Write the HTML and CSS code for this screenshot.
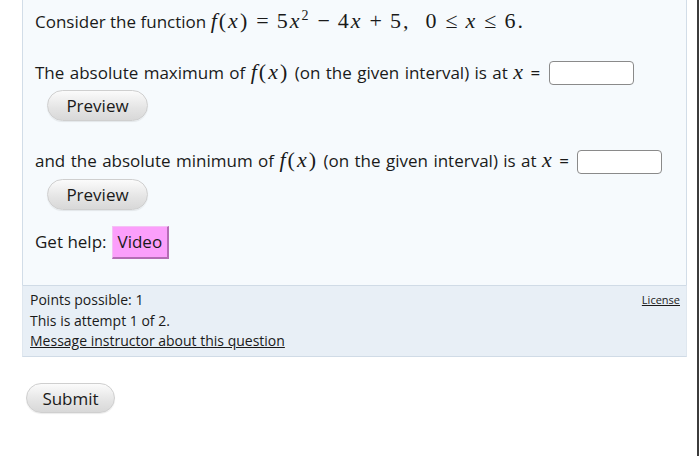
FILE: index.html
```html
<!DOCTYPE html>
<html>
<head>
<meta charset="utf-8">
<link rel="stylesheet" href="styles.css">
</head>
<body>
<div class="frame">
  <div class="question">
    <p class="line first">Consider the function <span class="math"><i>f</i>(<i>x</i>)<span class="mo">=</span>5<i>x</i><sup>2</sup><span class="mo">−</span>4<i>x</i><span class="mo">+</span>5,<span class="quad"></span>0<span class="mo">≤</span><i>x</i><span class="mo">≤</span>6.</span></p>
    <p class="line second">The absolute maximum of <span class="math"><i>f</i>(<i>x</i>)</span> (on the given interval) is at <span class="math"><i>x</i></span> = <span class="answer"></span></p>
    <button class="btn preview">Preview</button>
    <p class="line third">and the absolute minimum of <span class="math"><i>f</i>(<i>x</i>)</span> (on the given interval) is at <span class="math"><i>x</i></span> = <span class="answer"></span></p>
    <button class="btn preview">Preview</button>
    <p class="help">Get help: <span class="video">Video</span></p>
  </div>
  <div class="footer">
    <div class="info">
      <div>Points possible: 1</div>
      <div>This is attempt 1 of 2.</div>
      <div><a class="link" href="#">Message instructor about this question</a></div>
    </div>
    <a class="license" href="#">License</a>
  </div>
  <button class="btn submit">Submit</button>
</div>
</body>
</html>
```

FILE: styles.css
```css
html, body {
  margin: 0;
  padding: 0;
  background: #ffffff;
}
body {
  font-family: "Open Sans", "Noto Sans", sans-serif;
  color: #1a1a1a;
}
.frame {
  width: 697px;
  height: 456px;
  border-right: 2px solid #3c3c3c;
}
.question {
  margin-left: 22px;
  width: 665px;
  background: #f6fafd;
  border-left: 1px solid #d2dde8;
  border-right: 1px solid #d2dde8;
  padding: 10px 12px 0 12px;
  box-sizing: border-box;
  height: 285px;
}
.line {
  margin: 0;
  font-size: 17px;
  line-height: 24px;
  white-space: nowrap;
}
.second { margin-top: 27px; word-spacing: 1px; }
.third { margin-top: 28px; word-spacing: 1px; }
.math {
  font-family: "Liberation Serif", "DejaVu Serif", serif;
  font-size: 22px;
  line-height: 1;
  letter-spacing: 2px;
  word-spacing: 0;
}
.math i { font-style: italic; }
.math sup {
  font-size: 14px;
  line-height: 0;
  vertical-align: 8px;
}
.mo { margin: 0 6px 0 7px; }
.quad { display: inline-block; width: 15px; }
.answer {
  display: inline-block;
  vertical-align: middle;
  width: 83px;
  height: 22px;
  background: #ffffff;
  border: 1px solid #8a8a8a;
  border-radius: 4px;
  margin-left: 3px;
  position: relative;
  top: -1px;
}
.btn {
  display: block;
  font-family: "Open Sans", "Noto Sans", sans-serif;
  font-size: 17px;
  color: #1a1a1a;
  border: 1px solid #cfcfcf;
  border-radius: 16px;
  background: linear-gradient(#fbfbfb, #e4e4e4 60%, #d8d8d8);
  padding: 0;
  box-shadow: 0 1px 1px rgba(0,0,0,0.08);
}
.preview {
  width: 101px;
  height: 31px;
  margin: 4px 0 0 12px;
}
.help {
  margin: 16px 0 0 0;
  font-size: 17px;
  line-height: 32px;
  display: flex;
  align-items: center;
  gap: 5px;
}
.video {
  display: inline-block;
  background: #fb9ffb;
  border-top: 1px solid #f4c0f4;
  border-left: 1px solid #f4c0f4;
  border-right: 2px solid #b46cb4;
  border-bottom: 2px solid #b46cb4;
  padding: 0 5px 0 5px;
  line-height: 30px;
}
.footer {
  margin-left: 22px;
  width: 665px;
  box-sizing: border-box;
  height: 72px;
  background: #e8eff6;
  border-top: 1px solid #d0dbe6;
  border-bottom: 1px solid #d0dbe6;
  border-left: 1px solid #dfe7ef;
  border-right: 1px solid #dfe7ef;
  padding: 4px 6px 0 7px;
  display: flex;
  justify-content: space-between;
  font-size: 14px;
  line-height: 20.5px;
}
.link, .license {
  color: #1a1a1a;
  text-decoration: underline;
}
.license {
  font-size: 11px;
  line-height: 18px;
  margin-top: 1px;
}
.submit {
  width: 89px;
  height: 30px;
  margin: 26px 0 0 26px;
}
```
